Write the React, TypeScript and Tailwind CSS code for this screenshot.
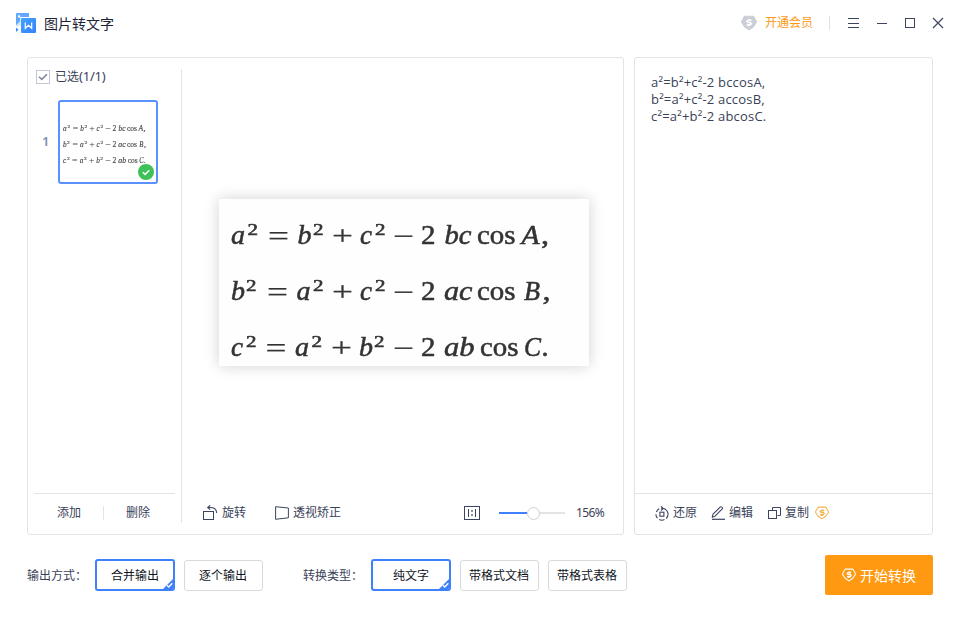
import { useState } from "react";
import type { ReactNode } from "react";

type Token = { t: string; x: number; w: number; kind?: "sup" | "up" | "op" };

// glyph runs of the scanned formulas, in the coordinates of the 370x167 picture
const FORMULAS: { y: number; tokens: Token[] }[] = [
  {
    y: 45,
    tokens: [
      { t: "a", x: 12, w: 14 },
      { t: "2", x: 28.5, w: 10.5, kind: "sup" },
      { t: "=", x: 49, w: 21, kind: "op" },
      { t: "b", x: 78.5, w: 14 },
      { t: "2", x: 94, w: 10.5, kind: "sup" },
      { t: "+", x: 113, w: 21, kind: "op" },
      { t: "c", x: 141, w: 12 },
      { t: "2", x: 156, w: 10.5, kind: "sup" },
      { t: "−", x: 174, w: 21, kind: "op" },
      { t: "2", x: 202, w: 14.5, kind: "up" },
      { t: "bc", x: 225.5, w: 27 },
      { t: "cos", x: 258, w: 38.5, kind: "up" },
      { t: "A", x: 302.5, w: 18 },
      { t: ",", x: 322, w: 8, kind: "up" },
    ],
  },
  {
    y: 101,
    tokens: [
      { t: "b", x: 12, w: 14 },
      { t: "2", x: 27, w: 10.5, kind: "sup" },
      { t: "=", x: 48, w: 21, kind: "op" },
      { t: "a", x: 77.5, w: 14 },
      { t: "2", x: 94, w: 10.5, kind: "sup" },
      { t: "+", x: 113, w: 21, kind: "op" },
      { t: "c", x: 141, w: 12 },
      { t: "2", x: 156, w: 10.5, kind: "sup" },
      { t: "−", x: 174, w: 21, kind: "op" },
      { t: "2", x: 202, w: 14.5, kind: "up" },
      { t: "ac", x: 225, w: 28.5 },
      { t: "cos", x: 258, w: 38.5, kind: "up" },
      { t: "B", x: 305, w: 16 },
      { t: ",", x: 323.5, w: 8, kind: "up" },
    ],
  },
  {
    y: 157,
    tokens: [
      { t: "c", x: 12, w: 12 },
      { t: "2", x: 27, w: 10.5, kind: "sup" },
      { t: "=", x: 46.5, w: 21, kind: "op" },
      { t: "a", x: 76, w: 14 },
      { t: "2", x: 92.5, w: 10.5, kind: "sup" },
      { t: "+", x: 112, w: 21, kind: "op" },
      { t: "b", x: 140, w: 14 },
      { t: "2", x: 155, w: 10.5, kind: "sup" },
      { t: "−", x: 174, w: 21, kind: "op" },
      { t: "2", x: 202, w: 14.5, kind: "up" },
      { t: "ab", x: 225, w: 30.5 },
      { t: "cos", x: 261, w: 38.5, kind: "up" },
      { t: "C", x: 305, w: 17 },
      { t: ".", x: 322.5, w: 7, kind: "up" },
    ],
  },
];

const RESULT_LINES = ["a²=b²+c²-2 bccosA,", "b²=a²+c²-2 accosB,", "c²=a²+b²-2 abcosC."];

const OUTPUT_MODES = ["合并输出", "逐个输出"];
const CONVERT_TYPES = ["纯文字", "带格式文档", "带格式表格"];

function FormulaImage({ className }: { className: string }) {
  return (
    <svg viewBox="0 0 370 167" preserveAspectRatio="none" className={className}>
      {FORMULAS.map((line) =>
        line.tokens.map((k) => (
          <text
            key={`${line.y}-${k.x}`}
            x={k.x}
            y={k.kind === "sup" ? line.y - 9.5 : k.kind === "op" ? line.y + 1 : line.y}
            textLength={k.w}
            lengthAdjust="spacingAndGlyphs"
            fontSize={k.kind === "sup" ? 16 : k.kind === "op" ? 27 : 27.5}
            fontStyle={k.kind ? "normal" : "italic"}
            fill="#333"
            stroke="#333"
            strokeWidth={k.kind === "op" ? 0.2 : 0.55}
          >
            {k.t}
          </text>
        ))
      )}
    </svg>
  );
}

function LogoIcon() {
  return (
    <svg width="20" height="20" viewBox="0 0 20 20">
      <defs>
        <linearGradient id="logo" x1="0" y1="0" x2="1" y2="1">
          <stop offset="0" stopColor="#41a4ff" />
          <stop offset="1" stopColor="#3681fb" />
        </linearGradient>
      </defs>
      <path d="M1 0h12v4H4.200v9H0V1q0-1 1-1z" fill="#62a8ff" />
      <path d="M0 12.200l4.200-4.200v5H0z" fill="#d6e8ff" />
      <rect x="2" y="2.300" width="2.200" height="2.200" fill="#fff" />
      <path d="M0 14.500l2.500 2.200L0 19z" fill="#3d8bfd" />
      <rect x="5" y="5" width="15" height="15" rx="1" fill="url(#logo)" />
      <path d="M9.300 9.500v5.800l3.200-3 3.200 3V9.500" fill="none" stroke="#fff" strokeWidth="1.200" />
    </svg>
  );
}

function CoinIcon({ color, filled = false, size = 15 }: { color: string; filled?: boolean; size?: number }) {
  return (
    <svg width={size} height={size} viewBox="0 0 15 15" fill="none">
      <path
        d="M3.300 1.200h8.400L14.300 6c.2.500.2.900-.2 1.300L11.600 11 7.500 13.800 3.400 11 .9 7.300C.5 6.900.5 6.500.7 6z"
        fill={filled ? color : "none"}
        stroke={color}
        strokeWidth="1.100"
        strokeLinejoin="round"
      />
      <path
        d="M9.800 4.900H6.800L5.600 6l1 1h2.200l.9 1.100-1.200 1.200H5.400M7.900 3.700v1.200M7.200 9.300v1.300"
        stroke={filled ? "#fff" : color}
        strokeWidth="1.500"
      />
    </svg>
  );
}

function RotateIcon() {
  return (
    <svg width="16" height="16" viewBox="0 0 16 16" fill="none" stroke="#3c4560">
      <rect x="1.500" y="6.500" width="10" height="8" />
      <path d="M5.500 2.500h3.200c3.500 0 5.800 2.300 6 5.500M8.200.3L5.700 2.500l2.500 2.200" strokeWidth="1.100" />
    </svg>
  );
}

function PerspectiveIcon() {
  return (
    <svg width="14" height="14" viewBox="0 0 14 14" fill="none" stroke="#3c4560">
      <path d="M.6.700L13.400 2v9.800L.6 13.300z" />
    </svg>
  );
}

function ActualSizeIcon() {
  return (
    <svg width="16" height="14" viewBox="0 0 16 14" fill="none" stroke="#3c4560">
      <rect x="0.500" y="0.500" width="15" height="13" />
      <path d="M4.500 3v8M11.500 3v8" />
      <path d="M8 4v2M8 8v2" stroke="#8b91a1" strokeWidth="2" />
    </svg>
  );
}

function RestoreIcon() {
  return (
    <svg width="14" height="15" viewBox="0 0 14 15" fill="none" stroke="#3c4560" strokeWidth="1.100">
      <path d="M4.200 2.700A6 6 0 0 0 1.400 6M.9 8.200A6 6 0 0 0 2.500 12.200M4.200 13.500A6 6 0 0 0 9.500 13.600M11.200 12.500A6 6 0 0 0 9.500 2.700L6 2.300M6 .3L8.200 2.400 6 4.600" />
      <rect x="4.900" y="6.200" width="4" height="4" />
    </svg>
  );
}

function EditIcon() {
  return (
    <svg width="14" height="14" viewBox="0 0 14 14" fill="none" stroke="#3c4560">
      <path d="M1.200 11.300l.8-3.200 7.400-7.200c.8-.6 2.600.8 1.900 1.900L4 10.200z" strokeWidth="1.100" strokeLinejoin="round" />
      <path d="M1 13.300h13" strokeWidth="1.200" />
    </svg>
  );
}

function CopyIcon() {
  return (
    <svg width="13" height="13" viewBox="0 0 13 13" fill="none" stroke="#3c4560">
      <path d="M4.500 3.500v-3h8v8h-3" />
      <rect x="0.500" y="3.500" width="8" height="8" />
    </svg>
  );
}

function ToolButton({ icon, label }: { icon: ReactNode; label: string }) {
  return (
    <button type="button" className="flex items-center gap-1">
      {icon}
      <span>{label}</span>
    </button>
  );
}

function OptionButton({ label, active, onClick }: { label: string; active: boolean; onClick: () => void }) {
  if (active) {
    return (
      <button
        type="button"
        onClick={onClick}
        className="relative h-8 w-20 overflow-hidden rounded-[3px] border-2 border-[#3f80fc] pt-px text-center text-[#10141c]"
      >
        {label}
        <svg width="12" height="12" viewBox="0 0 12 12" className="absolute -right-px -bottom-px">
          <path d="M12 0v12H0z" fill="#3f80fc" />
          <path d="M5 7.200l1.800 1.800L10.300 5.300" fill="none" stroke="#fff" strokeWidth="1.400" />
        </svg>
      </button>
    );
  }
  return (
    <button
      type="button"
      onClick={onClick}
      className="mt-px h-[31px] w-[79px] rounded-[3px] border border-[#d8dae0] pr-px text-center text-[#10141c]"
    >
      {label}
    </button>
  );
}

function Header() {
  return (
    <header className="flex h-[46px] items-center pr-[18px] pl-4">
      <LogoIcon />
      <h1 className="ml-2 flex-1 pt-[2px] text-sm text-[#1c2336]">图片转文字</h1>
      <CoinIcon color="#cbced6" filled size={16} />
      <span className="ml-2 w-12 whitespace-nowrap text-[#ff9914]">开通会员</span>
      <span className="ml-4 h-[14px] w-px bg-[#dfe1e5]" />
      <svg width="96" height="12" viewBox="0 0 96 12" fill="none" stroke="#3c4560" className="ml-[18px]">
        <path d="M0 1.500h11M0 6.500h11M0 10.500h11" />
        <path d="M29 6.500h10" />
        <rect x="57.500" y="1.500" width="9" height="9" />
        <path d="M85 1l10 10M95 1L85 11" strokeWidth="1.200" />
      </svg>
    </header>
  );
}

function Sidebar() {
  return (
    <aside className="my-[11px] flex w-[154px] flex-col border-r border-[#e3e4e8]">
      <div className="mt-px ml-2 flex h-[14px] items-center">
        <span className="flex h-[14px] w-[14px] items-center justify-center border border-[#c3c8d2]">
          <svg width="10" height="8" viewBox="0 0 10 8" fill="none" stroke="#7d8799" strokeWidth="1.500">
            <path d="M1 3.800l2.800 2.600L9 1.200" />
          </svg>
        </span>
        <span className="ml-[5px] text-[#3a4259]">
          已选<span className="text-[13px] tracking-[-0.2px]">(1/1)</span>
        </span>
      </div>
      <div className="mt-4 flex items-center">
        <span className="w-[30px] pl-[14px] text-[13px] font-semibold text-[#7f8fac]">1</span>
        <div className="relative flex h-[84px] w-[100px] flex-col items-center rounded-[3px] border-2 border-[#5b91ff]">
          <FormulaImage className="mt-4 h-[48px] w-[96px] opacity-90" />
          <span className="absolute right-[2px] bottom-[2px] flex h-4 w-4 items-center justify-center rounded-full bg-[#3dc158]">
            <svg width="8" height="7" viewBox="0 0 8 7" fill="none" stroke="#fff" strokeWidth="1.500">
              <path d="M.8 3.200l2.300 2.200L7.300 1.200" />
            </svg>
          </span>
        </div>
      </div>
      <div className="mx-[6px] mt-auto flex h-[30px] items-center justify-center border-t border-[#e3e4e8] pt-[9px] pr-[2px]">
        <button type="button">添加</button>
        <span className="mx-[22px] h-[14px] w-px bg-[#e3e4e8]" />
        <button type="button">删除</button>
      </div>
    </aside>
  );
}

function Preview() {
  return (
    <section className="flex flex-1 flex-col">
      <div className="flex flex-1 flex-col items-start pt-[141px] pl-[37px]">
        <div className="h-[167px] w-[370px] bg-[#fefefe] shadow-[0_0_14px_rgba(0,0,0,0.180)]">
          <FormulaImage className="h-full w-full blur-[0.4px]" />
        </div>
      </div>
      <div className="flex h-[42px] items-center pr-[19px] pl-[20px]">
        <ToolButton icon={<RotateIcon />} label="旋转" />
        <span className="w-[29px]" />
        <ToolButton icon={<PerspectiveIcon />} label="透视矫正" />
        <span className="ml-auto">
          <ActualSizeIcon />
        </span>
        <div className="ml-[19px] flex w-[66px] items-center">
          <span className="h-[2px] w-7 bg-[#3f80fc]" />
          <span className="h-[13px] w-[13px] rounded-full border border-[#cfd0d3] bg-white" />
          <span className="h-[2px] flex-1 bg-[#e3e4e6]" />
        </div>
        <span className="ml-[11px] w-7 tracking-[-0.6px] whitespace-nowrap">156%</span>
      </div>
    </section>
  );
}

export default function App() {
  const [mode, setMode] = useState(0);
  const [type, setType] = useState(0);

  return (
    <div className="flex h-[624px] w-[962px] flex-col bg-white font-['Noto_Sans','Noto_Sans_CJK_SC',sans-serif] text-xs text-[#3a4259]">
      <Header />
      <main className="mt-[11px] flex h-[478px] gap-[10px] pl-[27px]">
        <div className="flex w-[597px] rounded-[3px] border border-[#e1e3e8] [&_svg_text]:font-['Liberation_Serif',serif]">
          <Sidebar />
          <Preview />
        </div>
        <section className="flex w-[299px] flex-col rounded-[3px] border border-[#e1e3e8]">
          <div className="flex-1 px-4 pt-4 font-['Open_Sans',sans-serif] text-[13px] leading-[17px] tracking-[0.2px]">
            {RESULT_LINES.map((line) => (
              <p key={line}>{line}</p>
            ))}
          </div>
          <div className="flex h-[41px] items-center border-t border-[#e1e3e8] pb-[2px] pl-5">
            <ToolButton icon={<RestoreIcon />} label="还原" />
            <span className="w-[14px]" />
            <ToolButton icon={<EditIcon />} label="编辑" />
            <span className="w-[15px]" />
            <ToolButton icon={<CopyIcon />} label="复制" />
            <span className="ml-[6px]">
              <CoinIcon color="#f3b14e" size={14} />
            </span>
          </div>
        </section>
      </main>
      <footer className="mt-5 flex items-start pl-[27px]">
        <span className="mt-[5px] w-[68px] leading-8">输出方式：</span>
        <div className="mt-1 flex gap-[9px]">
          {OUTPUT_MODES.map((label, i) => (
            <OptionButton key={label} label={label} active={mode === i} onClick={() => setMode(i)} />
          ))}
        </div>
        <span className="mt-[5px] ml-10 w-[68px] leading-8">转换类型：</span>
        <div className="mt-1 flex gap-[9px]">
          {CONVERT_TYPES.map((label, i) => (
            <OptionButton key={label} label={label} active={type === i} onClick={() => setType(i)} />
          ))}
        </div>
        <button
          type="button"
          className="mr-[29px] ml-auto flex h-10 w-[108px] items-center justify-center gap-1 rounded-[2px] bg-[#ff9911] text-sm text-white"
        >
          <CoinIcon color="#fff" size={14} />
          <span className="pt-px">开始转换</span>
        </button>
      </footer>
    </div>
  );
}
